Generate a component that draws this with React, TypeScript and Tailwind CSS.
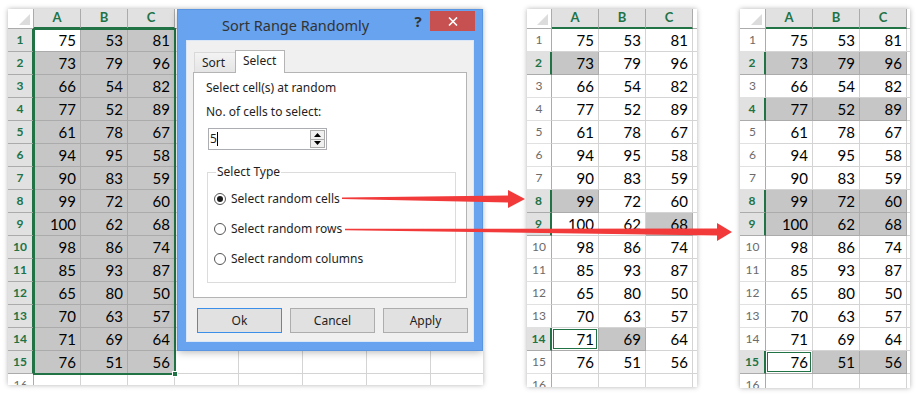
import { Fragment } from "react";
import clsx from "clsx";

const DATA: number[][] = [
  [75, 53, 81],
  [73, 79, 96],
  [66, 54, 82],
  [77, 52, 89],
  [61, 78, 67],
  [94, 95, 58],
  [90, 83, 59],
  [99, 72, 60],
  [100, 62, 68],
  [98, 86, 74],
  [85, 93, 87],
  [65, 80, 50],
  [70, 63, 57],
  [71, 69, 64],
  [76, 51, 56],
];

type SheetProps = {
  size: string;
  cols: string;
  extra: number;
  rows: number[];
  gray: (r: number, c: number) => boolean;
  active: [number, number];
  ring?: boolean;
  children?: React.ReactNode;
};

function Corner() {
  return (
    <div className="h-[20px] flex items-end justify-end p-[3px] bg-white border-r border-b border-r-[#ababab] border-b-[#ababab]">
      <svg width="11" height="11" viewBox="0 0 11 11">
        <polygon points="11,0 11,11 0,11" fill="#dcdcdc" />
      </svg>
    </div>
  );
}

function RowHead({ n, on }: { n: number; on: boolean }) {
  return (
    <div
      className={clsx(
        "h-[23px] flex items-center justify-center text-[12px] border-b",
        on
          ? "bg-[#e1e1e1] border-b-[#ababab] border-r-2 border-r-[#217346] font-bold text-[#217346]"
          : "bg-white border-b-[#e1e1e1] border-r border-r-[#ababab] text-[#6b6b6b]"
      )}
    >
      {n}
    </div>
  );
}

function Cell({ v, gray, active, ring }: { v?: number; gray?: boolean; active?: boolean; ring?: boolean }) {
  return (
    <div
      className={clsx(
        "h-[23px] flex items-end justify-end pr-[4px] pb-[3px] border-r border-b text-[15px] leading-none text-black",
        gray ? "bg-[#c6c6c6]" : "bg-white",
        gray || active ? "border-r-[#ababab] border-b-[#ababab]" : "border-r-[#d4d4d4] border-b-[#d4d4d4]",
        active && ring && "shadow-[inset_0_0_0_1px_#ffffff,inset_0_0_0_2px_#217346]"
      )}
    >
      {v}
    </div>
  );
}

function Sheet({ size, cols, extra, rows, gray, active, ring = true, children }: SheetProps) {
  const blanks = Array.from({ length: extra }, (_, i) => i);
  return (
    <div className={clsx("relative shrink-0 overflow-hidden bg-white shadow-[0_0_5px_rgba(0,0,0,0.3)] font-['Lato',sans-serif]", size)}>
      <div className={clsx("grid", cols)}>
        <Corner />
        {["A", "B", "C"].map((l) => (
          <div
            key={l}
            className="h-[20px] flex items-center justify-center bg-[#e1e1e1] border-r border-r-[#ababab] border-b-2 border-b-[#217346] text-[13px] font-bold text-[#217346]"
          >
            {l}
          </div>
        ))}
        {blanks.map((i) => (
          <div key={i} className="h-[20px] bg-white border-r border-b border-r-[#ababab] border-b-[#ababab]" />
        ))}
        {DATA.map((row, r) => (
          <Fragment key={r}>
            <RowHead n={r + 1} on={rows.includes(r)} />
            {row.map((v, c) => (
              <Cell
                key={c}
                v={v}
                gray={gray(r, c)}
                active={active[0] === r && active[1] === c}
                ring={ring}
              />
            ))}
            {blanks.map((i) => (
              <Cell key={"x" + i} />
            ))}
          </Fragment>
        ))}
        <RowHead n={16} on={false} />
        {[0, 1, 2].map((c) => (
          <Cell key={c} />
        ))}
        {blanks.map((i) => (
          <Cell key={"y" + i} />
        ))}
      </div>
      {children}
    </div>
  );
}

function Radio({ on, label }: { on?: boolean; label: string }) {
  return (
    <div className="h-[30px] flex items-center gap-[5px]">
      <span className="w-[12px] h-[12px] rounded-full border border-[#555555] bg-white flex items-center justify-center">
        {on && <span className="w-[6px] h-[6px] rounded-full bg-[#1a1a1a]" />}
      </span>
      <span>{label}</span>
    </div>
  );
}

function Btn({ label, primary }: { label: string; primary?: boolean }) {
  return (
    <div
      className={clsx(
        "w-[85px] h-[25px] flex items-center justify-center bg-[#e1e1e1] border",
        primary ? "border-[#3c8fe8]" : "border-[#adadad]"
      )}
    >
      {label}
    </div>
  );
}

function Dialog() {
  return (
    <div className="absolute left-[170px] top-[1px] w-[304px] h-[340px] bg-[#67a3ef] shadow-[0_0_0_1px_#5a95e2,0_2px_8px_rgba(0,0,0,0.3)] flex flex-col font-['Noto_Sans',sans-serif] text-[#1e1e1e]">
      {/* title bar */}
      <div className="h-[30px] flex items-start">
        <div className="flex-1 pl-[44px] pt-[5px] text-[14.5px] leading-[20px] text-[#333333]">Sort Range Randomly</div>
        <div className="pt-[3px] w-[14px] text-center text-[15px] font-bold leading-[16px] text-[#333333]">?</div>
        <div className="mt-[1px] ml-[5px] mr-[7px] w-[45px] h-[20px] bg-[#c75050] flex items-center justify-center">
          <svg width="10" height="9" viewBox="0 0 10 9">
            <path d="M1 0.5 L9 8.5 M9 0.5 L1 8.5" stroke="#ffffff" strokeWidth="1.6" />
          </svg>
        </div>
      </div>

      {/* body */}
      <div className="mx-[8px] mb-[8px] flex-1 bg-[#f0f0f0] border border-[#dbe7f7] flex flex-col text-[12px] leading-[16px]">
        <div className="flex items-end pl-[7px] pt-[9px]">
          <div className="h-[20px] w-[41px] pl-[7px] flex items-center bg-gradient-to-b from-[#f3f3f3] to-[#e5e5e5] border-t border-l border-t-[#d9d9d9] border-l-[#d9d9d9]">
            Sort
          </div>
          <div className="relative z-10 -mb-px h-[23px] w-[50px] pl-[7px] pb-[2px] flex items-center bg-white border-t border-l border-r border-t-[#b4b4b4] border-l-[#b4b4b4] border-r-[#b4b4b4]">
            Select
          </div>
        </div>

        <div className="mx-[6px] h-[226px] bg-white border border-[#b4b4b4] flex flex-col pl-[12px] pt-[7px]">
          <div>Select cell(s) at random</div>
          <div className="mt-[8px]">No. of cells to select:</div>
          <div className="mt-[8px] ml-[2px] w-[119px] h-[22px] flex bg-white border border-[#abadb3]">
            <div className="flex-1 flex items-center pl-[1px]">
              <span>5</span>
              <span className="w-px h-[14px] bg-black" />
            </div>
            <div className="w-[15px] my-[1px] mr-[1px] flex flex-col">
              <div className="flex-1 flex items-center justify-center bg-[#f0f0f0] border border-[#acacac]">
                <svg width="7" height="4" viewBox="0 0 7 4">
                  <polygon points="0,4 7,4 3.5,0" fill="#000000" />
                </svg>
              </div>
              <div className="flex-1 flex items-center justify-center bg-[#f0f0f0] border border-t-0 border-[#acacac]">
                <svg width="7" height="4" viewBox="0 0 7 4">
                  <polygon points="0,0 7,0 3.5,4" fill="#000000" />
                </svg>
              </div>
            </div>
          </div>

          <fieldset className="mt-[14px] ml-[1px] w-[249px] h-[119px] border border-[#dcdcdc]">
            <legend className="ml-[8px] px-[1px]">Select Type</legend>
            <div className="pt-[4px] pl-[6px]">
              <Radio on label="Select random cells" />
              <Radio label="Select random rows" />
              <Radio label="Select random columns" />
            </div>
          </fieldset>
        </div>

        <div className="mt-[10px] pl-[10px] flex gap-[8px]">
          <Btn label="Ok" primary />
          <Btn label="Cancel" />
          <Btn label="Apply" />
        </div>
      </div>
    </div>
  );
}

export default function App() {
  const picked2 = ["1-0", "7-0", "8-2", "13-1"];
  return (
    <div className="relative w-[920px] h-[395px] bg-white overflow-hidden flex items-start pl-[8px] pt-[9px]">
      {/* original range, all selected */}
      <Sheet
        size="w-[475px] h-[376px]"
        cols="grid-cols-[26px_47px_47px_47px_64px_64px_64px_64px_64px]"
        extra={5}
        rows={[0, 1, 2, 3, 4, 5, 6, 7, 8, 9, 10, 11, 12, 13, 14]}
        gray={(r, c) => !(r === 0 && c === 0)}
        active={[0, 0]}
        ring={false}
      >
        <div className="absolute left-[25px] top-[19px] w-[143px] h-[347px] border-2 border-[#217346]" />
        <div className="absolute left-[164px] top-[362px] w-[6px] h-[6px] bg-[#217346] border border-white" />
        <Dialog />
      </Sheet>

      {/* random cells */}
      <div className="ml-[44px]">
        <Sheet
          size="w-[170px] h-[378px]"
          cols="grid-cols-[25px_47px_47px_47px_64px]"
          extra={1}
          rows={[1, 7, 8, 13]}
          gray={(r, c) => picked2.includes(r + "-" + c)}
          active={[13, 0]}
        />
      </div>

      {/* random rows */}
      <div className="ml-[43px]">
        <Sheet
          size="w-[170px] h-[379px]"
          cols="grid-cols-[26px_47px_47px_47px_64px]"
          extra={1}
          rows={[1, 3, 7, 8, 14]}
          gray={(r, c) => [1, 3, 7, 8].includes(r) || (r === 14 && c > 0)}
          active={[14, 0]}
        />
      </div>

      {/* arrows */}
      <svg className="absolute left-0 top-0 pointer-events-none" width="920" height="395" viewBox="0 0 920 395">
        <polygon points="342,197.6 508,195.5 508,190 525,199 508,208 508,202.5 342,199" fill="#f23a3a" />
        <polygon points="345,228.8 717,228.5 717,223 732,232 717,241 717,235.5 345,230.3" fill="#f23a3a" />
      </svg>
    </div>
  );
}
